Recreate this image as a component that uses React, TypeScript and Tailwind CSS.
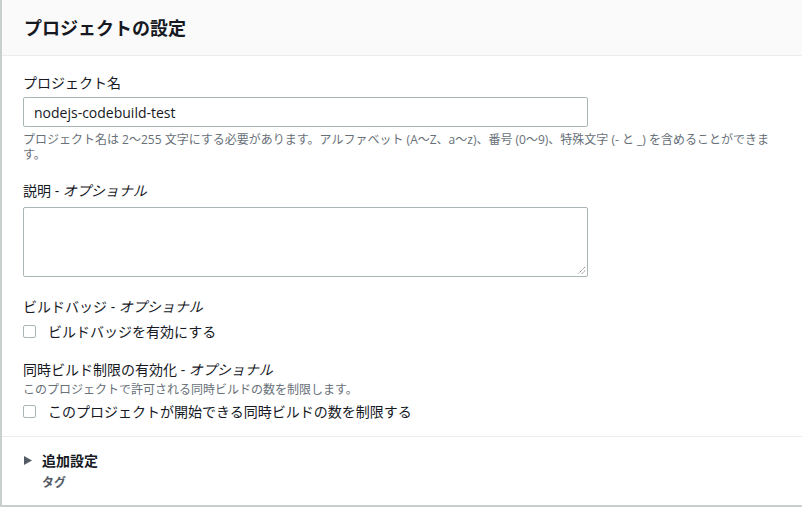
import React from "react";

const font = { fontFamily: '"Open Sans", "Noto Sans CJK JP", sans-serif' };

function Checkbox({ label }: { label: string }) {
  return (
    <label className="flex items-center gap-[12px] h-[22px]">
      <span className="w-[13px] h-[13px] border border-[#aab7b8] rounded-[2px] bg-white" />
      <span className="text-[14px] text-[#16191f]">{label}</span>
    </label>
  );
}

export default function App() {
  return (
    <div className="w-[802px] h-[508px] bg-white overflow-hidden" style={font}>
      <div className="h-[507px] border-l-2 border-b-2 border-[#c7cfcf] flex flex-col">
        <div className="h-[56px] bg-[#fafafa] border-b border-[#eaeded] flex items-center px-[22px] shrink-0">
          <h2 className="text-[18px] font-bold text-[#16191f] leading-[22px]">プロジェクトの設定</h2>
        </div>
        <div className="px-[21px] pt-[16px] flex flex-col">
          <div className="text-[14px] leading-[22px] text-[#16191f]">プロジェクト名</div>
          <div className="mt-[3px] w-[565px] h-[30px] border border-[#aab7b8] rounded-[2px] flex items-center px-[10px] text-[14px] text-[#16191f]">
            nodejs-codebuild-test
          </div>
          <div className="mt-[5px] text-[12px] leading-[15px] text-[#687078] w-[760px]">
            プロジェクト名は 2〜255 文字にする必要があります。アルファベット (A〜Z、a〜z)、番号 (0〜9)、特殊文字 (- と _) を含めることができます。
          </div>

          <div className="mt-[18px] text-[14px] leading-[22px] text-[#16191f]">
            説明 - <i>オプショナル</i>
          </div>
          <div className="mt-[5px] w-[565px] h-[70px] border border-[#aab7b8] rounded-[2px] relative">
            <svg className="absolute right-[1px] bottom-[1px]" width="9" height="9" viewBox="0 0 9 9">
              <path d="M8 1 L1 8 M8 4.5 L4.5 8" stroke="#666" strokeWidth="1" strokeDasharray="1 1" />
            </svg>
          </div>

          <div className="mt-[19px] text-[14px] leading-[22px] text-[#16191f]">
            ビルドバッジ - <i>オプショナル</i>
          </div>
          <div className="mt-[2px]">
            <Checkbox label="ビルドバッジを有効にする" />
          </div>

          <div className="mt-[18px] text-[14px] leading-[20px] text-[#16191f]">
            同時ビルド制限の有効化 - <i>オプショナル</i>
          </div>
          <div className="mt-[2px] text-[12px] leading-[16px] text-[#687078]">このプロジェクトで許可される同時ビルドの数を制限します。</div>
          <div className="mt-[2px]">
            <Checkbox label="このプロジェクトが開始できる同時ビルドの数を制限する" />
          </div>
        </div>
        <div className="mt-[14px] border-t border-[#eaeded] px-[22px] pt-[13px]">
          <div className="flex items-center gap-[10px] h-[20px]">
            <svg width="8" height="9" viewBox="0 0 8 9">
              <path d="M0 0 L8 4.5 L0 9 Z" fill="#545b64" />
            </svg>
            <span className="text-[14px] font-bold text-[#16191f]">追加設定</span>
          </div>
          <div className="pl-[18px] mt-[5px] text-[12px] font-bold text-[#545b64] leading-[16px]">タグ</div>
        </div>
      </div>
    </div>
  );
}
